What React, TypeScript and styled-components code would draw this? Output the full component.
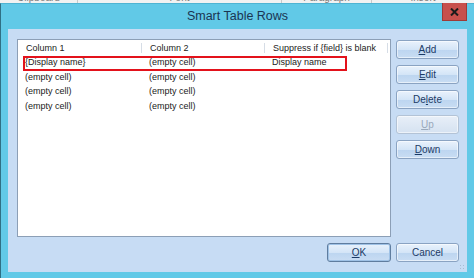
import React from 'react';
import styled, { createGlobalStyle } from 'styled-components';

const colors = {
    frame: '#61c9e7',
    frameEdge: '#2f6f84',
    client: '#c7dcf4',
    title: '#1b3552',
    text: '#1a1a1a',
    btnText: '#1c3b66',
    divider: '#d6dde6',
    listBorder: '#8c9fb6',
    red: '#e3121b',
};

const GlobalStyle = createGlobalStyle`
    html, body {
        margin: 0;
        padding: 0;
        background: #f1f1f1;
    }
    body {
        font-family: "Liberation Sans", Arial, sans-serif;
    }
`;

const Screen = styled.div`
    width: 474px;
    height: 278px;
    display: flex;
    flex-direction: column;
    overflow: hidden;
`;

const Ribbon = styled.div`
    height: 3px;
    flex: none;
    overflow: hidden;
    display: grid;
    grid-template-columns: 78px 204px 90px 1fr;
    background: #f2f2f2;
`;

const RibbonGroup = styled.div`
    border-right: 1px solid #c9c9c9;
    font-size: 10px;
    line-height: 10px;
    margin-top: -7px;
    color: #7a7a7a;
    text-align: center;
    &:last-child {
        border-right: none;
    }
`;

const Window = styled.div`
    flex: 1;
    display: flex;
    flex-direction: column;
    background: ${colors.frame};
    border-left: 1px solid ${colors.frameEdge};
    border-top: 1px solid #4fb4d3;
    padding: 0 7px 6px 7px;
`;

const TitleBar = styled.div`
    height: 25px;
    display: grid;
    grid-template-columns: 25px 1fr 25px;
    align-items: start;
`;

const Title = styled.div`
    grid-column: 2;
    text-align: center;
    font-size: 12.5px;
    line-height: 25px;
    color: ${colors.title};
`;

const CloseButton = styled.div`
    grid-column: 3;
    height: 18px;
    margin-top: -1px;
    background: #c7504c;
    border: 1px solid #9e3a37;
    border-top: none;
    box-sizing: border-box;
    display: flex;
    align-items: center;
    justify-content: center;
`;

const Client = styled.div`
    flex: 1;
    background: ${colors.client};
    padding: 10px 8px 10px 9px;
    display: flex;
    flex-direction: column;
    gap: 6px;
    position: relative;
`;

const Main = styled.div`
    flex: 1;
    display: flex;
    gap: 5px;
`;

const List = styled.div`
    width: 374px;
    box-sizing: border-box;
    background: #fff;
    border: 1px solid ${colors.listBorder};
    position: relative;
    font-size: 9px;
    color: ${colors.text};
`;

const Grid = styled.div`
    display: grid;
    grid-template-columns: 124px 123px 123px;
    grid-template-rows: 14px;
    grid-auto-rows: 14.5px;
    padding-top: 1px;
`;

const HeaderCell = styled.div`
    display: flex;
    align-items: center;
    padding-left: 8px;
    height: 14px;
    position: relative;
    color: #222;
    &::after {
        content: '';
        position: absolute;
        right: 0;
        top: 2px;
        bottom: 2px;
        width: 1px;
        background: ${colors.divider};
    }
`;

const Cell = styled.div`
    display: flex;
    align-items: center;
    padding-left: 7px;
    white-space: nowrap;
`;

const Highlight = styled.div`
    position: absolute;
    left: 5px;
    top: 16px;
    width: 324px;
    height: 15px;
    border: 2px solid ${colors.red};
    box-sizing: border-box;
`;

const SideButtons = styled.div`
    display: flex;
    flex-direction: column;
    gap: 6px;
    padding-top: 1px;
`;

const Button = styled.div<{ $disabled?: boolean; $default?: boolean }>`
    width: ${(p) => (p.$default ? '64px' : '63px')};
    height: 19px;
    box-sizing: border-box;
    border-radius: 3px;
    border: 1px solid ${(p) => (p.$default ? '#5f7d9f' : p.$disabled ? '#b3c3d6' : '#8aa3c2')};
    box-shadow: ${(p) => (p.$default ? 'inset 0 0 0 1px #9fc2e6' : 'inset 0 0 0 1px rgba(255,255,255,0.55)')};
    background: ${(p) =>
        p.$disabled
            ? 'linear-gradient(#e8eff8, #d5e2f1)'
            : 'linear-gradient(#e9f2fc 0%, #d4e5f7 50%, #bcd5f0 51%, #c9ddf3 100%)'};
    color: ${(p) => (p.$disabled ? '#9aa9bb' : colors.btnText)};
    font-size: 10px;
    display: flex;
    align-items: center;
    justify-content: center;
`;

const Footer = styled.div`
    display: flex;
    justify-content: flex-end;
    gap: 5px;
`;

const Grip = styled.div`
    position: absolute;
    right: 2px;
    bottom: 2px;
    width: 6px;
    height: 6px;
    background: radial-gradient(circle, #9fb3c9 0.7px, transparent 1px) 0 0 / 3px 3px;
    opacity: 0.8;
`;

const rows = [
    ['{Display name}', '(empty cell)', 'Display name'],
    ['(empty cell)', '(empty cell)', ''],
    ['(empty cell)', '(empty cell)', ''],
    ['(empty cell)', '(empty cell)', ''],
];

const Key = ({ label, index }: { label: string; index: number }) => (
    <>
        {label.slice(0, index)}
        <u>{label[index]}</u>
        {label.slice(index + 1)}
    </>
);

const sideButtons = [
    { label: 'Add', key: 0 },
    { label: 'Edit', key: 0 },
    { label: 'Delete', key: 2 },
    { label: 'Up', key: 0, disabled: true },
    { label: 'Down', key: 0 },
];

const App = () => {
    return (
        <Screen>
            <GlobalStyle />
            <Ribbon>
                <RibbonGroup>Clipboard</RibbonGroup>
                <RibbonGroup>Font</RibbonGroup>
                <RibbonGroup>Paragraph</RibbonGroup>
                <RibbonGroup>Insert</RibbonGroup>
            </Ribbon>
            <Window>
                <TitleBar>
                    <Title>Smart Table Rows</Title>
                    <CloseButton>
                        <svg width="9" height="8" viewBox="0 0 9 8">
                            <path d="M1 0.5 L8 7.5 M8 0.5 L1 7.5" stroke="#1b1b1b" strokeWidth="2" />
                        </svg>
                    </CloseButton>
                </TitleBar>
                <Client>
                    <Main>
                        <List>
                            <Grid>
                                <HeaderCell>Column 1</HeaderCell>
                                <HeaderCell>Column 2</HeaderCell>
                                <HeaderCell>Suppress if {'{field}'} is blank</HeaderCell>
                                {rows.map((row, i) =>
                                    row.map((text, j) => <Cell key={`${i}-${j}`}>{text}</Cell>),
                                )}
                            </Grid>
                            <Highlight />
                        </List>
                        <SideButtons>
                            {sideButtons.map(({ label, key, disabled }) => (
                                <Button key={label} $disabled={disabled}>
                                    <Key label={label} index={key} />
                                </Button>
                            ))}
                        </SideButtons>
                    </Main>
                    <Footer>
                        <Button $default>
                            <Key label="OK" index={0} />
                        </Button>
                        <Button>Cancel</Button>
                    </Footer>
                    <Grip />
                </Client>
            </Window>
        </Screen>
    );
};

export default App;
